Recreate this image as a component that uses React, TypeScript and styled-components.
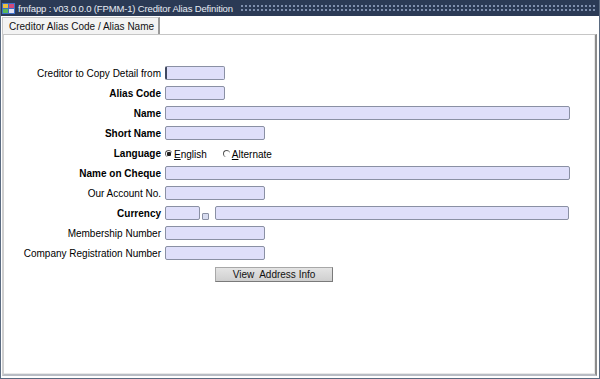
import React from "react";
import styled, { createGlobalStyle } from "styled-components";

const GlobalStyle = createGlobalStyle`
  html, body {
    margin: 0;
    padding: 0;
    background: #ffffff;
  }
  body {
    font-family: "Liberation Sans", Arial, sans-serif;
    font-size: 10px;
    color: #000;
  }
`;

const Window = styled.div`
  width: 600px;
  height: 379px;
  display: flex;
  flex-direction: column;
  background: #ffffff;
  border: 1px solid #5a6a80;
  border-top: none;
  box-sizing: border-box;
  overflow: hidden;
`;

const TitleBar = styled.div`
  height: 16px;
  display: flex;
  align-items: center;
  background: #2b3a55;
  color: #e8ecf4;
  padding: 0 3px 0 1px;
  gap: 2px;
  flex-shrink: 0;
`;

const TitleText = styled.span`
  font-size: 9.5px;
  letter-spacing: -0.15px;
  white-space: nowrap;
`;

const Dots = styled.div`
  flex: 1;
  height: 9px;
  margin-left: 5px;
  background-image: radial-gradient(circle, #8a9ab8 0.8px, transparent 1px);
  background-size: 4px 4px;
  background-position: 0 0;
  opacity: 0.9;
`;

const Body = styled.div`
  flex: 1;
  display: flex;
  flex-direction: column;
  padding: 1px 2px 2px 1px;
`;

const TabStrip = styled.div`
  display: flex;
  height: 17px;
`;

const Tab = styled.div`
  padding: 0 4px 0 6px;
  display: flex;
  align-items: center;
  background: #f3f3f3;
  border: 1px solid #c8c8c8;
  border-right: 2px solid #9a9a9a;
  border-bottom: none;
  font-size: 10px;
  color: #111;
`;

const Panel = styled.div`
  flex: 1;
  border: 1px solid #c6c6c6;
  border-left: 2px solid #cfcfcf;
  border-right: 2px solid #8c8c8c;
  border-bottom: 2px solid #b8bcc4;
  box-shadow: inset -1px -1px 0 #e8e8e8;
  padding-top: 31px;
  display: flex;
  flex-direction: column;
  gap: 6px;
`;

const Row = styled.div`
  display: grid;
  grid-template-columns: 157px 1fr;
  column-gap: 4px;
  align-items: center;
  height: 14px;
`;

const Label = styled.span<{ $bold?: boolean }>`
  text-align: right;
  font-weight: ${(p) => (p.$bold ? "bold" : "normal")};
  font-size: 10px;
  white-space: nowrap;
`;

const Fields = styled.div`
  display: flex;
  align-items: center;
`;

const Input = styled.div<{ $w: number; $cursor?: boolean }>`
  width: ${(p) => p.$w}px;
  height: 14px;
  box-sizing: border-box;
  background: #dfdffa;
  border: 1px solid #8a90a4;
  border-radius: 2px;
  border-left: ${(p) => (p.$cursor ? "2px solid #404860" : "1px solid #8a90a4")};
`;

const LovButton = styled.div`
  width: 5px;
  height: 5px;
  margin: 6px 6px 0 2px;
  background: #d8dcf0;
  border: 1px solid #8a90a4;
  border-radius: 1px;
`;

const RadioGroup = styled.div`
  display: flex;
  align-items: center;
  gap: 16px;
  margin-top: 3px;
`;

const Radio = styled.label`
  display: flex;
  align-items: center;
  gap: 2px;
  font-size: 10px;
`;

const RadioDot = styled.span<{ $on?: boolean }>`
  width: 7px;
  height: 7px;
  border-radius: 50%;
  box-sizing: border-box;
  border-left: 1px solid #555;
  border-top: 1px solid #555;
  background: ${(p) => (p.$on ? "radial-gradient(circle, #222 2px, transparent 2.5px)" : "transparent")};
  margin-top: -3px;
`;

const ButtonRow = styled.div`
  display: flex;
  padding-left: 211px;
  margin-top: 1px;
`;

const Button = styled.button`
  width: 118px;
  height: 15px;
  padding: 0;
  background: linear-gradient(#e4e4e4, #cfcfcf);
  border: 1px solid #a8a8a8;
  border-right-color: #7a7a7a;
  border-bottom-color: #7a7a7a;
  font-family: "Liberation Sans", Arial, sans-serif;
  font-size: 10px;
  color: #111;
  white-space: pre;
`;

const AppIcon = () => (
  <svg width="14" height="13" viewBox="0 0 14 13">
    <rect x="0" y="1" width="13" height="11" fill="#3c6fc8" />
    <rect x="1" y="2" width="5" height="4" fill="#e8c040" />
    <rect x="7" y="2" width="5" height="4" fill="#d24a7a" />
    <rect x="1" y="7" width="5" height="4" fill="#58b858" />
    <rect x="7" y="7" width="5" height="4" fill="#e0e0f0" />
  </svg>
);

export default function App() {
  return (
    <>
      <GlobalStyle />
      <Window>
        <TitleBar>
          <AppIcon />
          <TitleText>fmfapp : v03.0.0.0 (FPMM-1) Creditor Alias Definition</TitleText>
          <Dots />
        </TitleBar>
        <Body>
          <TabStrip>
            <Tab>Creditor Alias Code / Alias Name</Tab>
          </TabStrip>
          <Panel>
            <Row>
              <Label>Creditor to Copy Detail from</Label>
              <Fields><Input $w={60} $cursor /></Fields>
            </Row>
            <Row>
              <Label $bold>Alias Code</Label>
              <Fields><Input $w={60} /></Fields>
            </Row>
            <Row>
              <Label $bold>Name</Label>
              <Fields><Input $w={405} /></Fields>
            </Row>
            <Row>
              <Label $bold>Short Name</Label>
              <Fields><Input $w={100} /></Fields>
            </Row>
            <Row>
              <Label $bold>Language</Label>
              <RadioGroup>
                <Radio><RadioDot $on /><span><u>E</u>nglish</span></Radio>
                <Radio><RadioDot /><span><u>A</u>lternate</span></Radio>
              </RadioGroup>
            </Row>
            <Row>
              <Label $bold>Name on Cheque</Label>
              <Fields><Input $w={405} /></Fields>
            </Row>
            <Row>
              <Label>Our Account No.</Label>
              <Fields><Input $w={100} /></Fields>
            </Row>
            <Row>
              <Label $bold>Currency</Label>
              <Fields>
                <Input $w={35} />
                <LovButton />
                <Input $w={354} />
              </Fields>
            </Row>
            <Row>
              <Label>Membership Number</Label>
              <Fields><Input $w={100} /></Fields>
            </Row>
            <Row>
              <Label>Company Registration Number</Label>
              <Fields><Input $w={100} /></Fields>
            </Row>
            <ButtonRow>
              <Button>View  Address Info</Button>
            </ButtonRow>
          </Panel>
        </Body>
      </Window>
    </>
  );
}
